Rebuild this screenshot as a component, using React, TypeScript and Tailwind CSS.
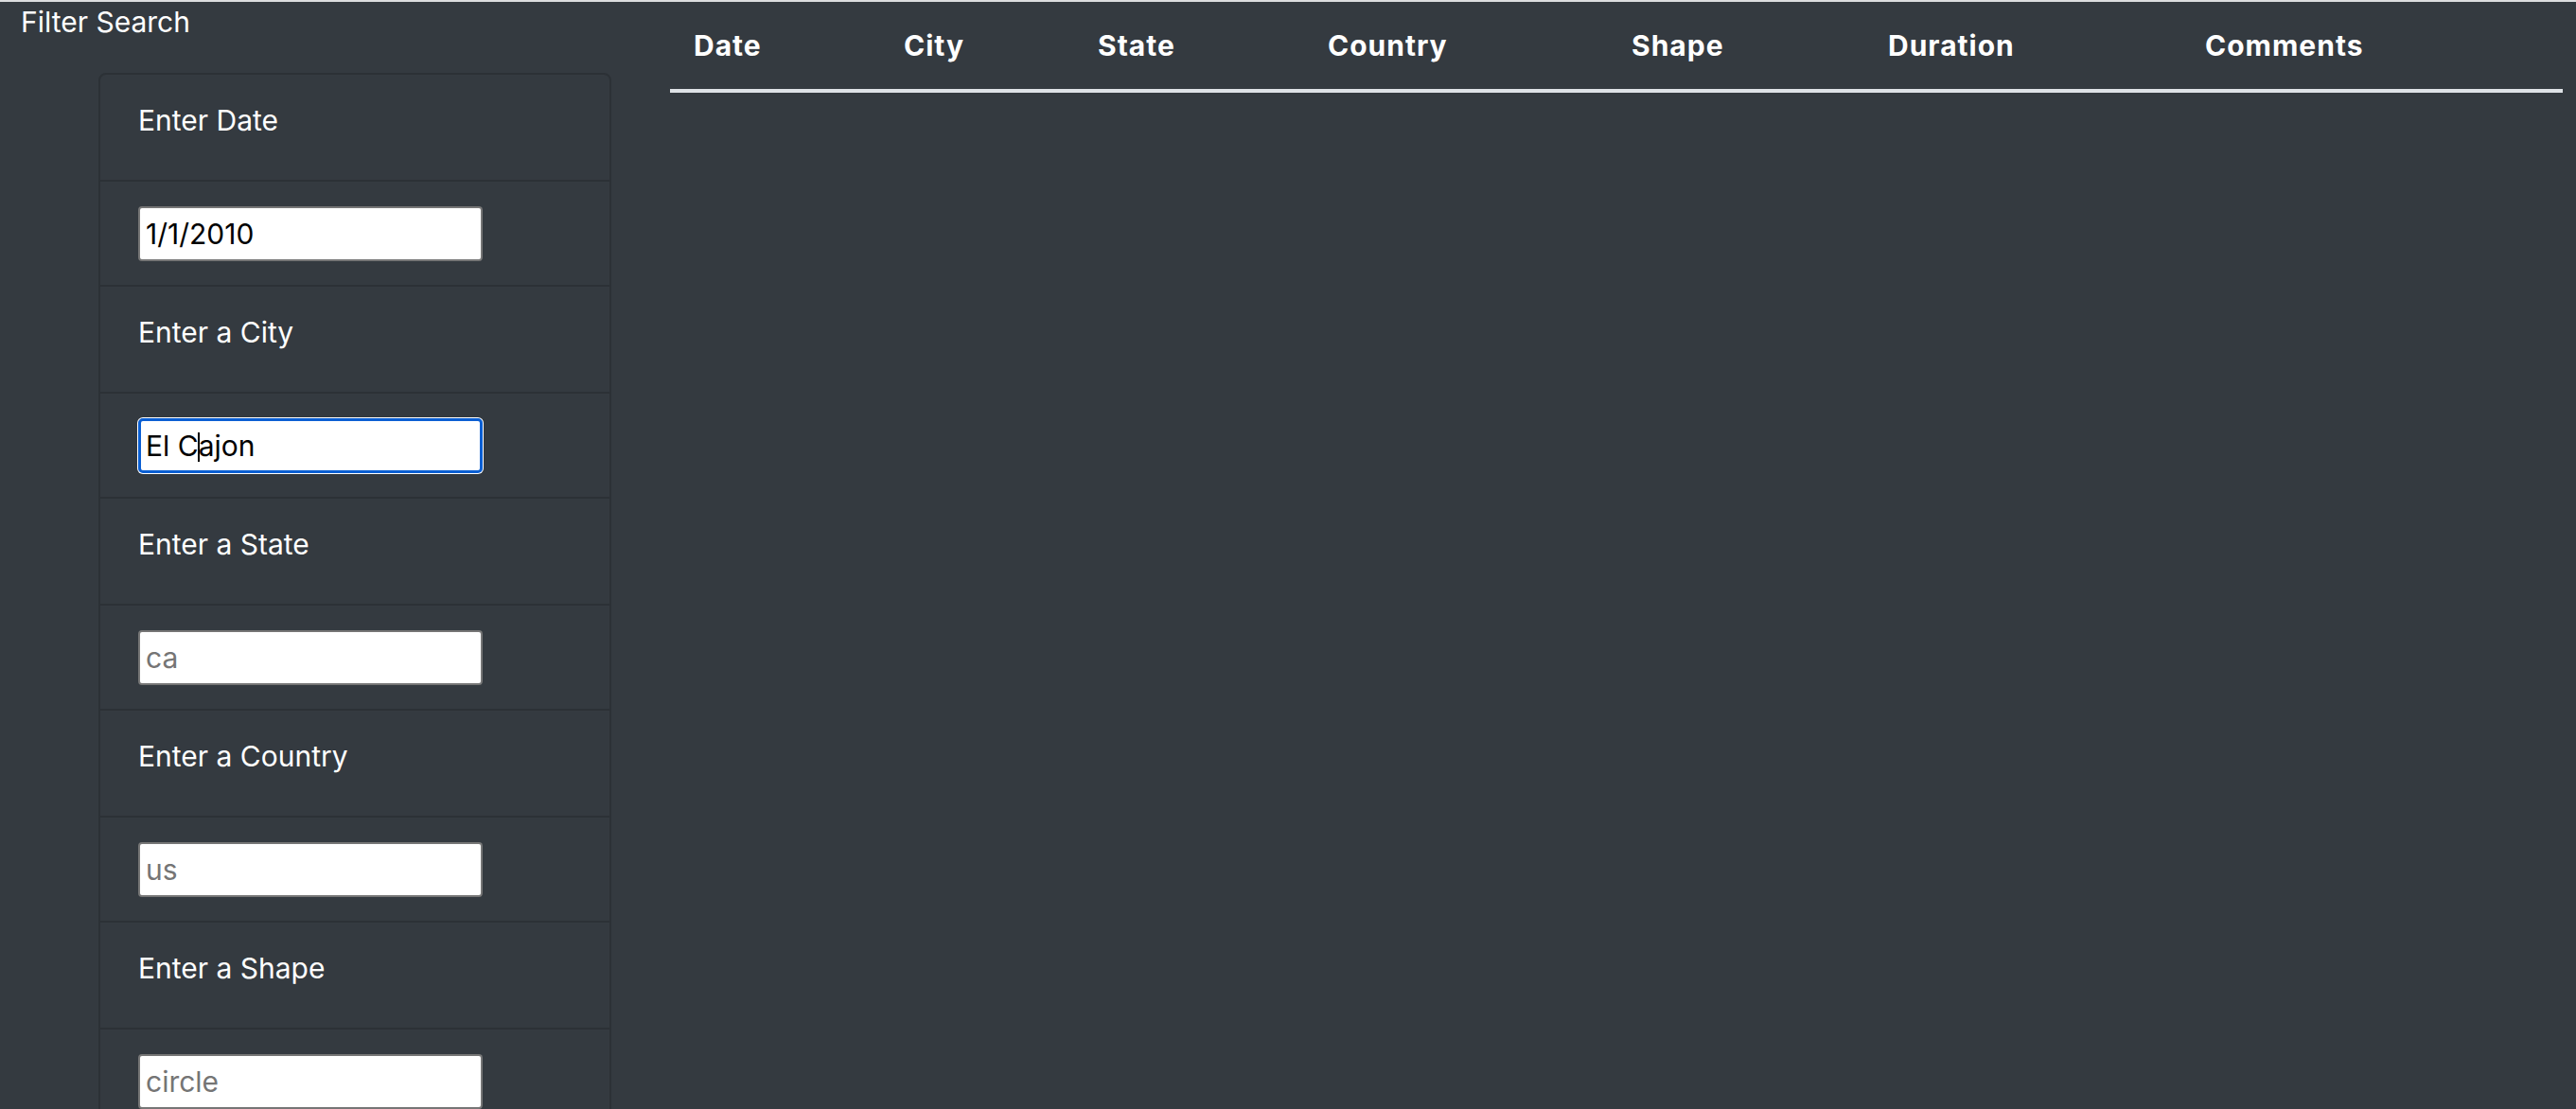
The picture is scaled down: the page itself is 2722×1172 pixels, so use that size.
import React from "react";

const columns = [
  { label: "Date", width: "w-[222px]" },
  { label: "City", width: "w-[205px]" },
  { label: "State", width: "w-[243px]" },
  { label: "Country", width: "w-[321px]" },
  { label: "Shape", width: "w-[271px]" },
  { label: "Duration", width: "w-[335px]" },
  { label: "Comments", width: "w-[403px]" },
];

// filtros do formulário
const filters = [
  { id: "datetime", label: "Enter Date", value: "1/1/2010", placeholder: "" },
  { id: "city", label: "Enter a City", value: "El Cajon", placeholder: "", focused: true },
  { id: "state", label: "Enter a State", value: "", placeholder: "ca" },
  { id: "country", label: "Enter a Country", value: "", placeholder: "us" },
  { id: "shape", label: "Enter a Shape", value: "", placeholder: "circle" },
];

function FilterInput({ value, placeholder, focused }: { value: string; placeholder: string; focused?: boolean }) {
  return (
    <div className="relative w-[364px]">
      <input
        type="text"
        defaultValue={value}
        placeholder={placeholder}
        className={
          focused
            ? "block w-[364px] h-[58px] bg-white rounded-[5px] border-[3px] border-[#0b5fd3] shadow-[0_0_0_1px_#ffffff] px-[5px] text-[30px] text-black outline-none placeholder:text-[#757575]"
            : "block w-[364px] h-[58px] bg-white rounded-[4px] border-2 border-[#767676] px-[6px] text-[30px] text-black outline-none placeholder:text-[#757575]"
        }
      />
      {focused && <span className="absolute left-[63px] top-[15px] w-[2px] h-[31px] bg-black" />}
    </div>
  );
}

export default function App() {
  return (
    <div className="min-h-screen bg-[#343a40] border-t-2 border-[#dcdddf] font-['Inter','Liberation_Sans',sans-serif] text-white overflow-hidden">
      <div className="flex">
        <div className="w-[688px] shrink-0">
          <h1 className="pl-[22px] text-[30px] leading-[42px] font-normal">Filter Search</h1>
          <div className="ml-[104px] mt-[33px] w-[542px] border-2 border-[#2c3136] rounded-[8px]">
            {filters.map((f) => (
              <div key={f.id}>
                <div className="px-[40px] pt-[27px] pb-[42px] border-b-2 border-[#2c3136]">
                  <label htmlFor={f.id} className="block text-[30px] leading-[42px]">
                    {f.label}
                  </label>
                </div>
                <div className="px-[40px] pt-[26px] pb-[25px] border-b-2 border-[#2c3136]">
                  <FilterInput value={f.value} placeholder={f.placeholder} focused={f.focused} />
                </div>
              </div>
            ))}
          </div>
        </div>

        <div className="ml-[20px] w-[2000px] shrink-0">
          <table className="table-fixed border-collapse w-[2000px]">
            <thead>
              <tr className="border-b-4 border-[#dee2e6]">
                {columns.map((c) => (
                  <th
                    key={c.label}
                    className={c.width + " text-left font-bold text-[30px] tracking-[1px] leading-[42px] px-[25px] py-[25px]"}
                  >
                    {c.label}
                  </th>
                ))}
              </tr>
            </thead>
            <tbody></tbody>
          </table>
        </div>
      </div>
    </div>
  );
}
